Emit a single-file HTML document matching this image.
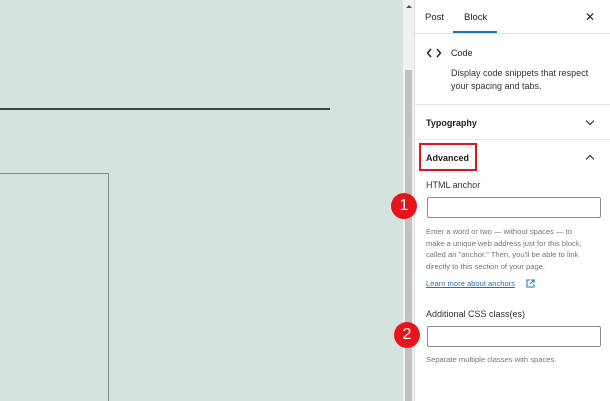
<!DOCTYPE html><html><head><style>
*{margin:0;padding:0;box-sizing:border-box}
html,body{width:610px;height:401px;overflow:hidden}
body{position:relative;background:#fff;font-family:"Liberation Sans",sans-serif;color:#1e1e1e}
.a{position:absolute}
.t{font-size:9px}
</style></head><body>
<div class="a" style="left:0;top:0;width:403px;height:401px;background:#d2e4dd;overflow:hidden">
<div class="a" style="left:0;top:108px;width:330px;height:2px;background:#3a4448"></div>
<div class="a" style="left:-2px;top:173px;width:111px;height:260px;border:1px solid #7d8a8c"></div>
</div>
<div class="a" style="left:403px;top:0;width:11px;height:401px;background:#f1f1f1"></div>
<div class="a" style="left:405px;top:70px;width:7px;height:331px;background:#c1c1c1"></div>
<div class="a" style="left:406px;top:5px;width:0;height:0;border-left:3px solid transparent;border-right:3px solid transparent;border-bottom:3px solid #505050"></div>
<div class="a" style="left:414px;top:0;width:1px;height:401px;background:#e0e0e0"></div>
<div class="a" style="left:415px;top:33px;width:195px;height:1px;background:#e0e0e0"></div>
<div class="a t" style="left:425px;top:12px;font-size:9.5px">Post</div>
<div class="a t" style="left:464px;top:12px;font-size:9.5px">Block</div>
<div class="a" style="left:453px;top:31px;width:44px;height:2px;background:#2271b1"></div>
<div class="a" style="left:585px;top:10px;font-size:12px">✕</div>
<svg class="a" style="left:426px;top:48px" width="16" height="10" viewBox="0 0 16 10"><path d="M5 1L1.5 5L5 9M11 1L14.5 5L11 9" fill="none" stroke="#1e1e1e" stroke-width="1.4"/></svg>
<div class="a t" style="left:451px;top:48px">Code</div>
<div class="a t" style="left:451px;top:67px;line-height:13px;color:#333">Display code snippets that respect<br>your spacing and tabs.</div>
<div class="a" style="left:415px;top:104px;width:195px;height:1px;background:#e8e8e8"></div>
<div class="a t" style="left:426px;top:118px;font-weight:bold">Typography</div>
<div class="a" style="left:587px;top:118px;width:6px;height:6px;border-right:1.5px solid #1e1e1e;border-bottom:1.5px solid #1e1e1e;transform:rotate(45deg)"></div>
<div class="a" style="left:415px;top:139px;width:195px;height:1px;background:#e8e8e8"></div>
<div class="a" style="left:419px;top:143px;width:58px;height:28px;border:2px solid #e8141c"></div>
<div class="a t" style="left:426px;top:153px;font-weight:bold">Advanced</div>
<div class="a" style="left:587px;top:156px;width:6px;height:6px;border-left:1.5px solid #1e1e1e;border-top:1.5px solid #1e1e1e;transform:rotate(45deg)"></div>
<div class="a t" style="left:426px;top:180px;color:#333">HTML anchor</div>
<div class="a" style="left:427px;top:197px;width:174px;height:21px;border:1px solid #8c8c8c;border-radius:2px"></div>
<div class="a" style="left:391px;top:193px;width:26px;height:26px;border-radius:50%;background:#e8141c;color:#fff;font-size:16px;text-align:center;line-height:26px">1</div>
<div class="a" style="left:426px;top:226px;font-size:7.6px;line-height:11.7px;color:#757575">Enter a word or two — without spaces — to<br>make a unique web address just for this block,<br>called an "anchor." Then, you'll be able to link<br>directly to this section of your page.</div>
<div class="a" style="left:426px;top:279px;font-size:7.6px;color:#2271b1;text-decoration:underline">Learn more about anchors</div>
<svg class="a" style="left:526px;top:279px" width="9" height="9" viewBox="0 0 9 9"><path d="M4 1H1V8H8V5M5 1H8V4M8 1L4 5" fill="none" stroke="#2271b1" stroke-width="1"/></svg>
<div class="a t" style="left:426px;top:309px;color:#333">Additional CSS class(es)</div>
<div class="a" style="left:427px;top:326px;width:174px;height:21px;border:1px solid #8c8c8c;border-radius:2px"></div>
<div class="a" style="left:394px;top:322px;width:26px;height:26px;border-radius:50%;background:#e8141c;color:#fff;font-size:16px;text-align:center;line-height:26px">2</div>
<div class="a" style="left:426px;top:355px;font-size:7.6px;color:#757575">Separate multiple classes with spaces.</div>
</body></html>
